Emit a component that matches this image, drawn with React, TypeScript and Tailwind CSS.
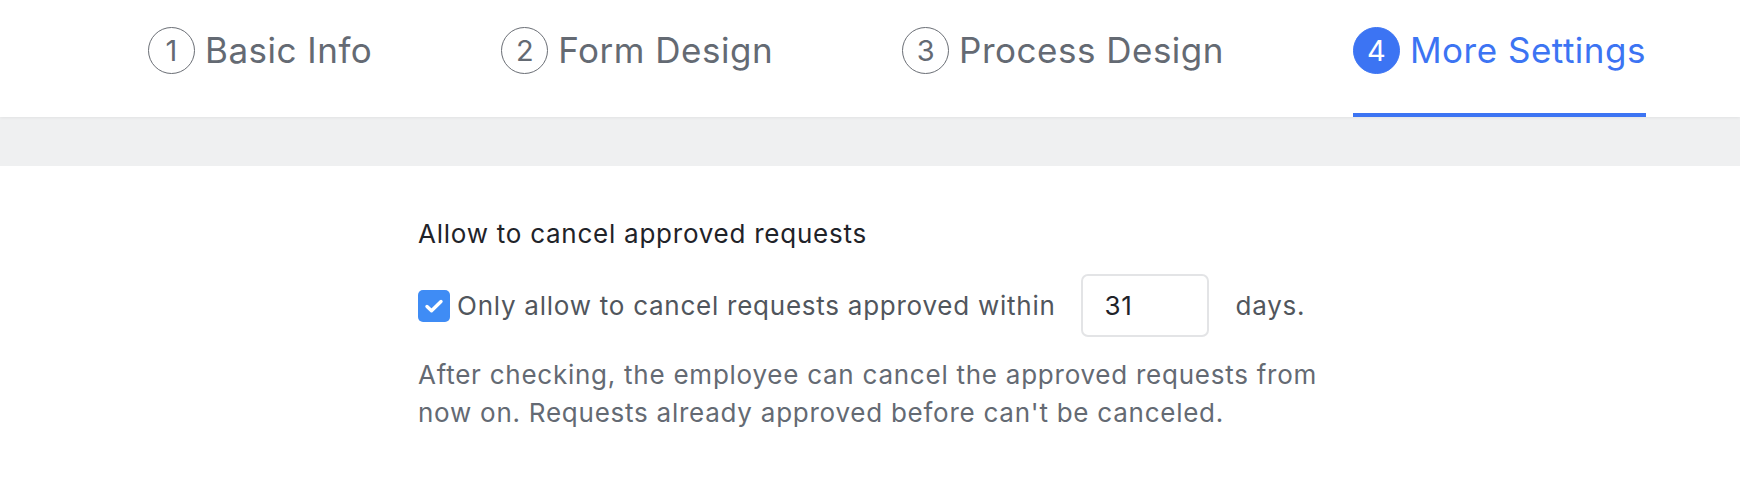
import React from "react";

const tabs = [
  { n: "1", label: "Basic Info" },
  { n: "2", label: "Form Design" },
  { n: "3", label: "Process Design" },
  { n: "4", label: "More Settings", active: true },
];

export default function App() {
  return (
    <div className="w-[1740px] h-[488px] bg-white overflow-hidden" style={{ fontFamily: 'Inter, "Noto Sans", "Liberation Sans", sans-serif' }}>
      <div className="h-[117px] bg-white flex items-stretch pl-[148px] gap-[129px] shadow-[0_1px_3px_rgba(0,0,0,0.06)] relative z-10">
        {tabs.map((t) => (
          <div
            key={t.n}
            className={`flex items-center gap-[10px] pb-[13px] border-b-[4px] ${t.active ? "border-[#3c74f3] text-[#3c74f3]" : "border-transparent text-[#646a73]"}`}
          >
            <span
              className={`w-[47px] h-[47px] rounded-full flex items-center justify-center text-[29px] leading-none ${t.active ? "bg-[#3c74f3] text-white border-[1.5px] border-[#3c74f3]" : "border-[1.5px] border-[#6a6e75]"}`}
            >
              {t.n}
            </span>
            <span className="text-[35px] leading-none tracking-[0.5px]">{t.label}</span>
          </div>
        ))}
      </div>
      <div className="h-[49px] bg-[#eff0f1]" />
      <div className="pl-[418px] pt-[49px] tracking-[0.75px]">
        <div className="text-[26px] leading-[38px] text-[#1f2329]">Allow to cancel approved requests</div>
        <div className="mt-[21px] flex items-center h-[63px]">
          <span className="w-[32px] h-[32px] rounded-[5px] bg-[#3f8cf5] flex items-center justify-center mr-[7px]">
            <svg width="24" height="24" viewBox="0 0 24 24" fill="none">
              <path d="M5 12.5l4.5 4.2L19 7.5" stroke="white" strokeWidth="3.4" strokeLinecap="round" strokeLinejoin="round" />
            </svg>
          </span>
          <span className="text-[26px] text-[#51565d]">Only allow to cancel requests approved within</span>
          <div className="ml-[25px] w-[128px] h-[63px] border-2 border-[#e3e4e6] rounded-[7px] flex items-center pl-[22px] text-[26px] text-[#1f2329]">
            31
          </div>
          <span className="ml-[27px] text-[26px] text-[#51565d]">days.</span>
        </div>
        <div className="mt-[19px] text-[26px] leading-[38px] text-[#646a73]">
          After checking, the employee can cancel the approved requests from
          <br />
          now on. Requests already approved before can't be canceled.
        </div>
      </div>
    </div>
  );
}
